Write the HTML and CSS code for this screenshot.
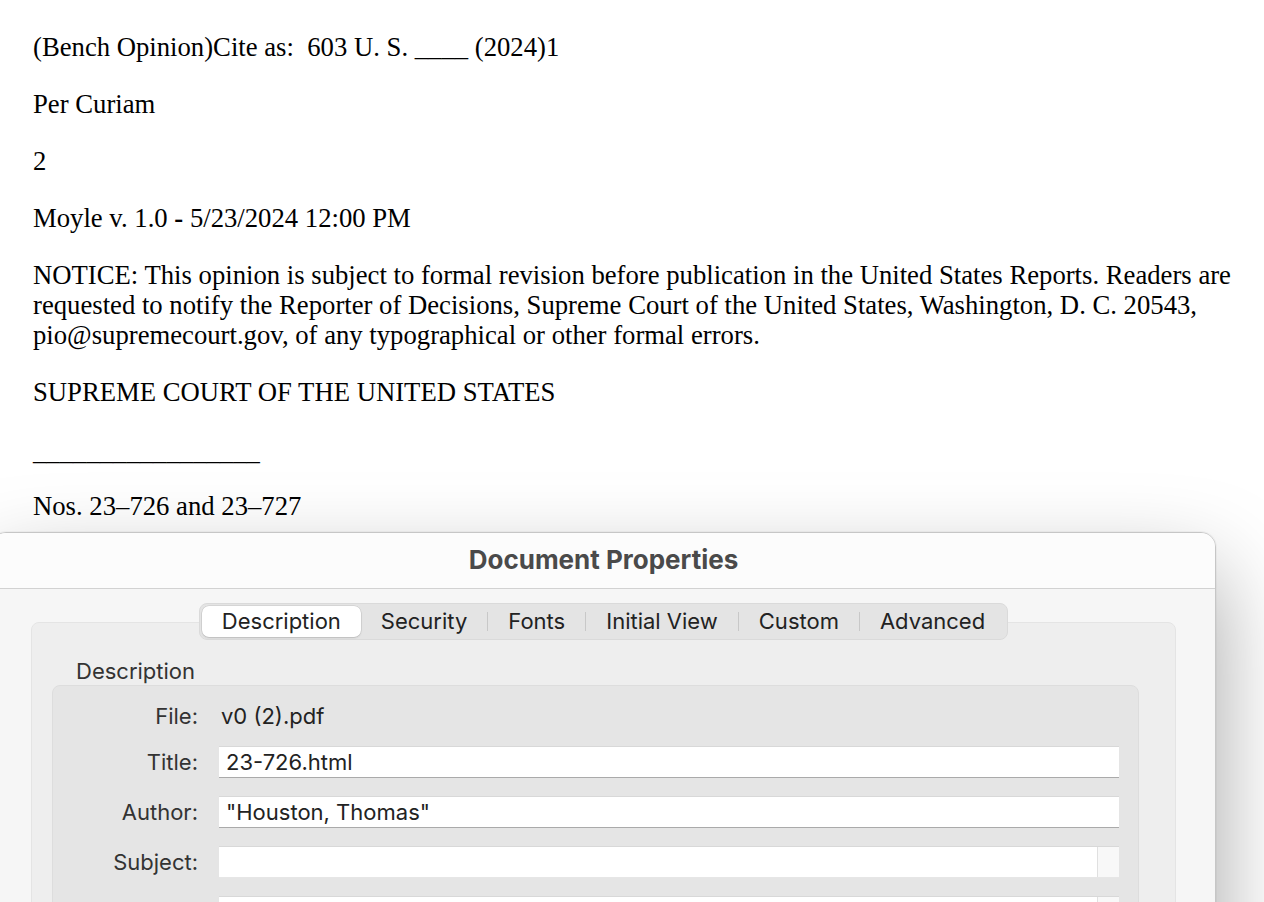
FILE: index.html
```html
<!DOCTYPE html>
<html lang="en">
<head>
    <meta charset="UTF-8">
    <meta name="viewport" content="width=device-width, initial-scale=1.0">
    <title>23-726.html</title>
    <link rel="stylesheet" href="styles.css">
</head>
<body>
    <div class="page">
        <p>(Bench Opinion)Cite as:&nbsp; 603 U. S. ____ (2024)1</p>
        <p>Per Curiam</p>
        <p>2</p>
        <p>Moyle v. 1.0 <b>-</b> 5/23/2024 12:00 PM</p>
        <p>NOTICE: This opinion is subject to formal revision before publication in the United States Reports. Readers are requested to notify the Reporter of Decisions, Supreme Court of the United States, Washington, D. C. 20543, pio@supremecourt.gov, of any typographical or other formal errors.</p>
        <p>SUPREME COURT OF THE UNITED STATES</p>
        <p class="rule">_________________</p>
        <p>Nos. 23–726 and 23–727</p>
    </div>

    <div class="dialog">
        <div class="dialog-title">Document Properties</div>
        <div class="dialog-body">
            <div class="tabs">
                <span class="tab active">Description</span>
                <span class="tab">Security</span>
                <span class="sep"></span>
                <span class="tab">Fonts</span>
                <span class="sep"></span>
                <span class="tab">Initial View</span>
                <span class="sep"></span>
                <span class="tab">Custom</span>
                <span class="sep"></span>
                <span class="tab">Advanced</span>
            </div>
            <div class="group">
                <div class="group-label">Description</div>
                <div class="fields">
                    <div class="row row-file">
                        <label>File:</label>
                        <span class="value">v0 (2).pdf</span>
                    </div>
                    <div class="row row-title">
                        <label>Title:</label>
                        <div class="field">23-726.html</div>
                    </div>
                    <div class="row">
                        <label>Author:</label>
                        <div class="field">"Houston, Thomas"</div>
                    </div>
                    <div class="row">
                        <label>Subject:</label>
                        <div class="field area"><span class="text"></span><span class="scroll"></span></div>
                    </div>
                    <div class="row">
                        <label>Keywords:</label>
                        <div class="field area"><span class="text"></span><span class="scroll"></span></div>
                    </div>
                </div>
            </div>
        </div>
    </div>
</body>
</html>
```

FILE: styles.css
```css
html, body {
    margin: 0;
    padding: 0;
    height: 100%;
    overflow: hidden;
}
body {
    background: #fff;
    font-family: 'Liberation Serif', 'Times New Roman', serif;
    color: #000;
}
.page {
    padding: 32px 20px 0 33px;
    font-size: 26.7px;
    line-height: 30px;
}
.page p {
    margin: 0 0 27px 0;
}
.page p.rule {
    position: relative;
    top: 2px;
}
.page b {
    font-weight: bold;
}

/* dialog sheet over the document */
.dialog {
    position: absolute;
    left: -9px;
    top: 532px;
    width: 1223px;
    height: 700px;
    background: #f6f6f6;
    border: 1px solid #c6c6c6;
    border-radius: 15px;
    box-shadow: 0 40px 90px rgba(0, 0, 0, 0.36), 0 0 0 1px rgba(0, 0, 0, 0.03);
    font-family: 'Inter', 'Helvetica', sans-serif;
    color: #222;
    overflow: hidden;
}
.dialog-title {
    height: 55px;
    line-height: 54px;
    text-align: center;
    font-size: 26px;
    font-weight: 700;
    color: #4a4a4a;
    background: #fcfcfc;
    border-bottom: 1px solid #d2d2d2;
}
.dialog-body {
    padding: 14px 39px 0 39px;
}
.tabs {
    position: relative;
    z-index: 1;
    display: flex;
    align-items: center;
    width: max-content;
    margin: 0 auto -18px auto;
    height: 35px;
    padding: 0 2px;
    background: #e4e4e4;
    border: 1px solid #dadada;
    border-radius: 8px;
    font-size: 22px;
}
.tab {
    padding: 0 20px;
    line-height: 31px;
    color: #222;
}
.tab.active {
    background: #fff;
    border-radius: 7px;
    box-shadow: 0 0 0 0.5px rgba(0, 0, 0, 0.12), 0 1px 2px rgba(0, 0, 0, 0.12);
}
.sep {
    width: 1px;
    height: 19px;
    background: #c8c8c8;
}
.group {
    background: #eeeeee;
    border: 1px solid #e4e4e4;
    border-radius: 8px;
    padding: 35px 36px 0 20px;
    height: 600px;
}
.group-label {
    font-size: 22px;
    color: #333;
    padding-left: 24px;
    line-height: 26px;
    margin-bottom: 1px;
}
.fields {
    background: #e5e5e5;
    border: 1px solid #dddddd;
    border-radius: 8px;
    padding: 13px 19px 20px 0;
    height: 500px;
}
.row {
    display: flex;
    align-items: center;
    margin-bottom: 18px;
    font-size: 22px;
}
.row label {
    width: 145px;
    text-align: right;
    color: #333;
    padding-right: 21px;
    flex-shrink: 0;
}
.row-file {
    height: 34px;
    margin-bottom: 13px;
}
.row-file .value {
    padding-left: 2px;
    color: #222;
}
.field {
    flex: 1;
    height: 30px;
    line-height: 31px;
    background: #fff;
    border-top: 1px solid #d8d8d8;
    border-bottom: 1px solid #aaa;
    padding-left: 7px;
    color: #222;
}
.field.area {
    display: flex;
    padding-left: 0;
    border-bottom: 1px solid #e6e6e6;
}
.field.area .text {
    flex: 1;
}
.field.area .scroll {
    width: 21px;
    background: #f8f8f8;
    border-left: 1px solid #e0e0e0;
}
```
